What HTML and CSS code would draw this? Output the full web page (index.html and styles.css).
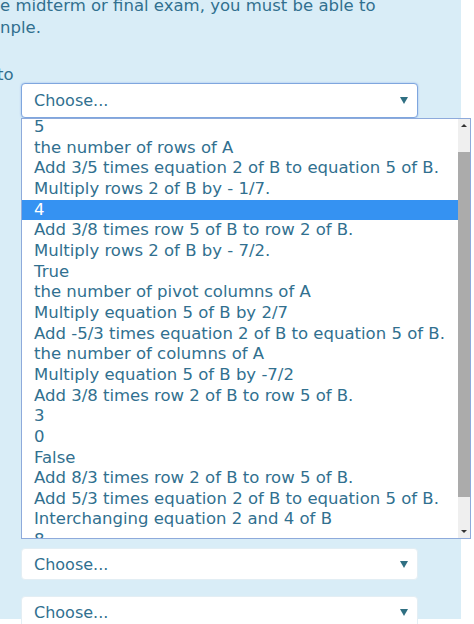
FILE: index.html
```html
<!DOCTYPE html>
<html lang="en">

<head>
  <meta charset="UTF-8">
  <meta name="viewport" content="width=device-width, initial-scale=1.0">
  <title>Quiz question</title>
  <link rel="stylesheet" href="styles.css">
</head>

<body>
  <div class="panel">
    <!-- question text, scrolled sideways so the left side is cut -->
    <div class="intro">
      <div>e midterm or final exam, you must be able to</div>
      <div>nple.</div>
    </div>

    <div class="lead"><span class="cut">to</span></div>

    <div class="answers">
      <div class="select-wrap">
        <div class="select open">
          <span>Choose...</span>
          <span class="caret"></span>
        </div>

        <!-- open dropdown list -->
        <div class="dropdown">
          <ul class="options">
            <li>5</li>
            <li>the number of rows of A</li>
            <li>Add 3/5 times equation 2 of B to equation 5 of B.</li>
            <li>Multiply rows 2 of B by - 1/7.</li>
            <li class="active">4</li>
            <li>Add 3/8 times row 5 of B to row 2 of B.</li>
            <li>Multiply rows 2 of B by - 7/2.</li>
            <li>True</li>
            <li>the number of pivot columns of A</li>
            <li>Multiply equation 5 of B by 2/7</li>
            <li>Add -5/3 times equation 2 of B to equation 5 of B.</li>
            <li>the number of columns of A</li>
            <li>Multiply equation 5 of B by -7/2</li>
            <li>Add 3/8 times row 2 of B to row 5 of B.</li>
            <li>3</li>
            <li>0</li>
            <li>False</li>
            <li>Add 8/3 times row 2 of B to row 5 of B.</li>
            <li>Add 5/3 times equation 2 of B to equation 5 of B.</li>
            <li>Interchanging equation 2 and 4 of B</li>
            <li>8</li>
          </ul>
          <div class="scrollbar">
            <span class="arrow up"></span>
            <div class="track">
              <div class="thumb"></div>
            </div>
            <span class="arrow down"></span>
          </div>
        </div>
      </div>

      <div class="hidden-rows"></div>

      <div class="select">
        <span>Choose...</span>
        <span class="caret"></span>
      </div>
      <div class="select">
        <span>Choose...</span>
        <span class="caret"></span>
      </div>
    </div>
  </div>
</body>

</html>
```

FILE: styles.css
```css
body,
html {
  margin: 0;
  padding: 0;
  width: 100%;
  height: 100%;
  overflow: hidden;
  background-color: #fff;
}

.panel {
  width: 461px;
  height: 100%;
  background-color: #d9edf7;
  color: #31708f;
  font-family: "DejaVu Sans", Verdana, sans-serif;
  font-size: 16.5px;
}

.intro {
  margin-top: -5px;
  line-height: 22px;
  white-space: nowrap;
}

.lead {
  margin-top: 28px;
  height: 16px;
  line-height: 16px;
  overflow: hidden;
}

.cut {
  display: inline-block;
  margin-left: -3px;
}

.answers {
  padding-left: 21px;
  display: flex;
  flex-direction: column;
  gap: 16px;
}

.select-wrap {
  position: relative;
}

.select {
  box-sizing: border-box;
  width: 397px;
  height: 32px;
  padding: 0 9px 0 12px;
  display: flex;
  align-items: center;
  justify-content: space-between;
  background-color: #fff;
  border: 1px solid #e3eef4;
  border-radius: 4px;
  font-size: 16px;
}

.select.open {
  height: 35px;
  border-color: #7fa6de;
  box-shadow: 0 0 2px rgba(102, 150, 233, 0.6);
}

.caret {
  width: 0;
  height: 0;
  border-left: 4px solid transparent;
  border-right: 4px solid transparent;
  border-top: 7px solid #2f6f82;
}

.dropdown {
  position: absolute;
  top: 100%;
  left: 0;
  z-index: 2;
  box-sizing: border-box;
  width: 450px;
  height: 421px;
  display: flex;
  background-color: #fff;
  border: 1px solid #8eaadb;
  overflow: hidden;
}

.options {
  flex: 1;
  margin: -2px 0 0;
  padding: 0;
  list-style: none;
  line-height: 20.65px;
  white-space: nowrap;
  overflow: hidden;
}

.options li {
  padding-left: 12px;
}

.options li.active {
  background-color: #3592f2;
  color: #fff;
}

.scrollbar {
  width: 12px;
  display: flex;
  flex-direction: column;
  align-items: center;
  background-color: #efefef;
}

.arrow {
  flex: none;
  width: 0;
  height: 0;
  border-left: 3px solid transparent;
  border-right: 3px solid transparent;
}

.arrow.up {
  margin: 5px 0 8px;
  border-bottom: 3px solid #333;
}

.arrow.down {
  margin: 8px 0 5px;
  border-top: 3px solid #333;
}

.track {
  flex: 1;
  width: 100%;
}

.thumb {
  margin-top: 17px;
  height: 345px;
  background-color: #ababab;
}

.hidden-rows {
  height: 398px;
}
```
